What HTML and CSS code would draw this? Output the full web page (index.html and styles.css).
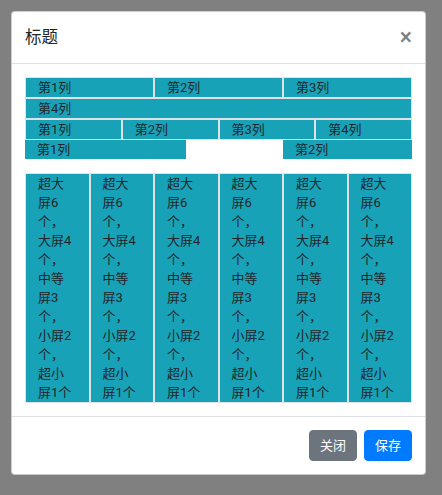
FILE: index.html
```html
<!DOCTYPE html>
<html lang="zh">
<head>
  <meta charset="UTF-8" />
  <title>标题</title>
  <link rel="stylesheet" href="styles.css">
</head>
<body>
  <div class="modal">
    <div class="modal-header">
      <h5 class="modal-title">标题</h5>
      <button class="close">&times;</button>
    </div>

    <div class="modal-body">
      <div class="row">
        <div class="col col-4">第1列</div>
        <div class="col col-4">第2列</div>
        <div class="col col-4">第3列</div>
      </div>
      <div class="row">
        <div class="col col-12">第4列</div>
      </div>
      <div class="row">
        <div class="col col-3">第1列</div>
        <div class="col col-3">第2列</div>
        <div class="col col-3">第3列</div>
        <div class="col col-3">第4列</div>
      </div>
      <div class="row">
        <div class="col col-5 plain">第1列</div>
        <div class="col col-4 plain offset-3">第2列</div>
      </div>

      <div class="row screens">
        <div class="col col-2">超大屏6个，大屏4个，中等屏3个，小屏2个，超小屏1个</div>
        <div class="col col-2">超大屏6个，大屏4个，中等屏3个，小屏2个，超小屏1个</div>
        <div class="col col-2">超大屏6个，大屏4个，中等屏3个，小屏2个，超小屏1个</div>
        <div class="col col-2">超大屏6个，大屏4个，中等屏3个，小屏2个，超小屏1个</div>
        <div class="col col-2">超大屏6个，大屏4个，中等屏3个，小屏2个，超小屏1个</div>
        <div class="col col-2">超大屏6个，大屏4个，中等屏3个，小屏2个，超小屏1个</div>
      </div>
    </div>

    <div class="modal-footer">
      <button class="btn btn-secondary">关闭</button>
      <button class="btn btn-primary">保存</button>
    </div>
  </div>
</body>
</html>
```

FILE: styles.css
```css
body {
  margin: 0;
  background: #808080;
  font-family: Roboto, "Noto Sans CJK SC", sans-serif;
  font-size: 13px;
  line-height: 19px;
  color: #212529;
}
.modal {
  width: 415px;
  box-sizing: border-box;
  margin: 11px 16px 0 11px;
  background: #fff;
  border: 1px solid rgba(0, 0, 0, .2);
  border-radius: 4px;
}
.modal-header {
  display: flex;
  align-items: center;
  justify-content: space-between;
  padding: 13px;
  border-bottom: 1px solid #dee2e6;
}
.modal-title {
  margin: 0;
  font-size: 16.5px;
  font-weight: normal;
  line-height: 25px;
}
.close {
  padding: 0;
  margin: 0;
  background: none;
  border: none;
  font-family: Roboto, sans-serif;
  font-size: 23px;
  font-weight: 500;
  line-height: 1;
  color: #000;
  opacity: .5;
  cursor: pointer;
}
.modal-body {
  padding: 13px;
}
.row {
  display: flex;
}
.col {
  box-sizing: border-box;
  padding: 0 13px 0 12px;
  background: #17a2b8;
  border: 1px solid #dee2e6;
}
.col.plain {
  border: none;
  padding-left: 12px;
}
.col-2 { flex: 0 0 16.6667%; }
.col-3 { flex: 0 0 25%; }
.col-4 { flex: 0 0 33.3333%; }
.col-5 { flex: 0 0 41.6667%; }
.col-12 { flex: 0 0 100%; }
.offset-3 { margin-left: 25%; }
.screens {
  margin-top: 14px;
}
.modal-footer {
  display: flex;
  justify-content: flex-end;
  gap: 7px;
  padding: 13px;
  border-top: 1px solid #dee2e6;
}
.btn {
  font-family: Roboto, "Noto Sans CJK SC", sans-serif;
  font-size: 13px;
  line-height: 19px;
  padding: 5px 10px;
  border: 1px solid transparent;
  border-radius: 4px;
  color: #fff;
  cursor: pointer;
}
.btn-secondary {
  background: #6c757d;
  border-color: #6c757d;
}
.btn-primary {
  background: #007bff;
  border-color: #007bff;
}
```
